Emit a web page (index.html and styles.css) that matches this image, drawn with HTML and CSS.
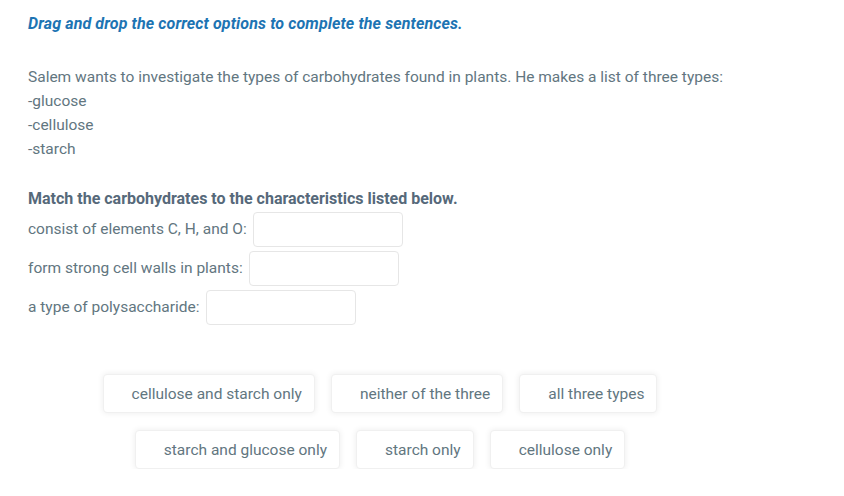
FILE: index.html
```html
<!DOCTYPE html>
<html lang="en">
<head>
<meta charset="utf-8">
<title>Drag and drop</title>
<link rel="stylesheet" href="styles.css">
</head>
<body>
<main class="page">
  <h1 class="title">Drag and drop the correct options to complete the sentences.</h1>
  <div class="stem">
    <p>Salem wants to investigate the types of carbohydrates found in plants. He makes a list of three types:</p>
    <p>-glucose</p>
    <p>-cellulose</p>
    <p>-starch</p>
  </div>
  <p class="prompt">Match the carbohydrates to the characteristics listed below.</p>
  <div class="rows">
    <div class="row"><span class="label">consist of elements C, H, and O:</span><span class="drop"></span></div>
    <div class="row"><span class="label">form strong cell walls in plants:</span><span class="drop"></span></div>
    <div class="row"><span class="label">a type of polysaccharide:</span><span class="drop"></span></div>
  </div>
  <div class="bank">
    <div class="bank-row">
      <div class="chip">cellulose and starch only</div>
      <div class="chip">neither of the three</div>
      <div class="chip">all three types</div>
    </div>
    <div class="bank-row">
      <div class="chip">starch and glucose only</div>
      <div class="chip">starch only</div>
      <div class="chip">cellulose only</div>
    </div>
  </div>
</main>
</body>
</html>
```
FILE: styles.css
```css
* { box-sizing: border-box; }
html, body { margin: 0; padding: 0; background: #ffffff; }
body {
  font-family: "Roboto", "Open Sans", sans-serif;
  color: #62767f;
  font-size: 15.5px;
}
.page {
  padding: 14px 0 0 28px;
  width: 760px;
}
.title {
  margin: 0;
  font-size: 16px;
  letter-spacing: 0.12px;
  line-height: 20px;
  font-weight: 700;
  font-style: italic;
  color: #1d74b3;
}
.stem {
  margin-top: 31px;
}
.stem p {
  margin: 0;
  line-height: 24px;
}
.prompt {
  margin: 28px 0 0;
  font-weight: 700;
  font-size: 16px;
  line-height: 20px;
  color: #56697a;
}
.rows {
  display: flex;
  flex-direction: column;
  gap: 5px;
  margin-top: 3px;
}
.row {
  display: flex;
  align-items: center;
  gap: 6px;
  height: 34px;
}
.drop {
  width: 150px;
  height: 35px;
  border: 1px solid #e6e6e6;
  border-radius: 4px;
  background: #fff;
}
.bank {
  margin-top: 50px;
  width: 704px;
  display: flex;
  flex-direction: column;
  gap: 17px;
}
.bank-row {
  display: flex;
  justify-content: center;
  gap: 16px;
}
.chip {
  height: 39px;
  display: flex;
  align-items: center;
  padding: 0 12px 0 28px;
  background: #fff;
  border-radius: 4px;
  border: 1px solid #f0f0f0;
  box-shadow: 0 0 6px rgba(0,0,0,0.08);
  color: #62767f;
  white-space: nowrap;
}
```
